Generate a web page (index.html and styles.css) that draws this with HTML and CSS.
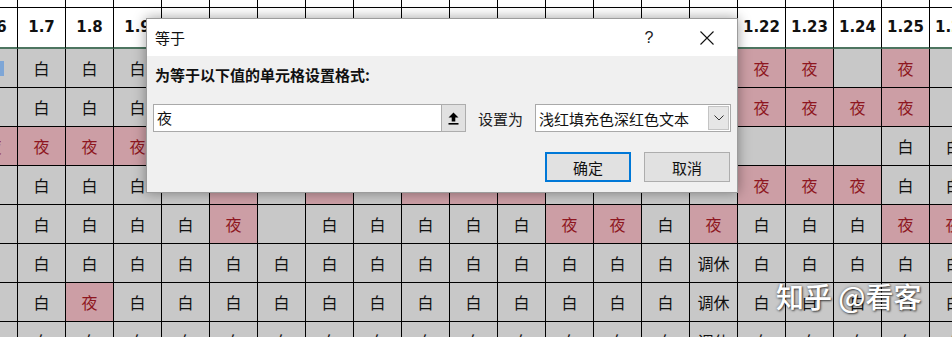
FILE: index.html
```html
<!DOCTYPE html>
<html lang="zh">
<head>
<meta charset="utf-8">
<title>等于</title>
<link rel="stylesheet" href="styles.css">
</head>
<body>
<div class="sheet">
  <div class="row top">
    <div class="t"></div><div class="t"></div><div class="t"></div><div class="t"></div><div class="t"></div><div class="t"></div><div class="t"></div><div class="t"></div><div class="t"></div><div class="t"></div><div class="t"></div><div class="t"></div><div class="t"></div><div class="t"></div><div class="t"></div><div class="t"></div><div class="t"></div><div class="t"></div><div class="t"></div><div class="t"></div><div class="t"></div>
  </div>
  <div class="row head">
    <div class="h">1.6</div><div class="h">1.7</div><div class="h">1.8</div><div class="h">1.9</div><div class="h">1.10</div><div class="h">1.11</div><div class="h">1.12</div><div class="h">1.13</div><div class="h">1.14</div><div class="h">1.15</div><div class="h">1.16</div><div class="h">1.17</div><div class="h">1.18</div><div class="h">1.19</div><div class="h">1.20</div><div class="h">1.21</div><div class="h">1.22</div><div class="h">1.23</div><div class="h">1.24</div><div class="h">1.25</div><div class="h">1.26</div>
  </div>
  <div class="row">
    <div class="c"><span class="mark"></span></div><div class="c">白</div><div class="c">白</div><div class="c">白</div><div class="c">白</div><div class="c">白</div><div class="c">白</div><div class="c">白</div><div class="c">白</div><div class="c">白</div><div class="c">白</div><div class="c">白</div><div class="c">白</div><div class="c">白</div><div class="c">白</div><div class="c">白</div><div class="c y">夜</div><div class="c y">夜</div><div class="c"></div><div class="c y">夜</div><div class="c"></div>
  </div>
  <div class="row">
    <div class="c"></div><div class="c">白</div><div class="c">白</div><div class="c">白</div><div class="c">白</div><div class="c">白</div><div class="c">白</div><div class="c">白</div><div class="c">白</div><div class="c">白</div><div class="c">白</div><div class="c">白</div><div class="c">白</div><div class="c">白</div><div class="c">白</div><div class="c">白</div><div class="c y">夜</div><div class="c y">夜</div><div class="c y">夜</div><div class="c y">夜</div><div class="c"></div>
  </div>
  <div class="row">
    <div class="c y">夜</div><div class="c y">夜</div><div class="c y">夜</div><div class="c y">夜</div><div class="c">白</div><div class="c">白</div><div class="c">白</div><div class="c">白</div><div class="c">白</div><div class="c">白</div><div class="c">白</div><div class="c">白</div><div class="c">白</div><div class="c">白</div><div class="c">白</div><div class="c">白</div><div class="c"></div><div class="c"></div><div class="c"></div><div class="c">白</div><div class="c">白</div>
  </div>
  <div class="row">
    <div class="c"></div><div class="c">白</div><div class="c">白</div><div class="c">白</div><div class="c"></div><div class="c y"></div><div class="c"></div><div class="c y"></div><div class="c"></div><div class="c y"></div><div class="c y"></div><div class="c y"></div><div class="c"></div><div class="c"></div><div class="c"></div><div class="c"></div><div class="c y">夜</div><div class="c y">夜</div><div class="c y">夜</div><div class="c">白</div><div class="c">白</div>
  </div>
  <div class="row">
    <div class="c"></div><div class="c">白</div><div class="c">白</div><div class="c">白</div><div class="c">白</div><div class="c y">夜</div><div class="c"></div><div class="c">白</div><div class="c">白</div><div class="c">白</div><div class="c">白</div><div class="c">白</div><div class="c y">夜</div><div class="c y">夜</div><div class="c">白</div><div class="c y">夜</div><div class="c">白</div><div class="c">白</div><div class="c">白</div><div class="c y">夜</div><div class="c y">夜</div>
  </div>
  <div class="row">
    <div class="c"></div><div class="c">白</div><div class="c">白</div><div class="c">白</div><div class="c">白</div><div class="c">白</div><div class="c">白</div><div class="c">白</div><div class="c">白</div><div class="c">白</div><div class="c">白</div><div class="c">白</div><div class="c">白</div><div class="c">白</div><div class="c">白</div><div class="c">调休</div><div class="c">白</div><div class="c">白</div><div class="c">白</div><div class="c">白</div><div class="c">白</div>
  </div>
  <div class="row">
    <div class="c"></div><div class="c">白</div><div class="c y">夜</div><div class="c">白</div><div class="c">白</div><div class="c">白</div><div class="c">白</div><div class="c">白</div><div class="c">白</div><div class="c">白</div><div class="c">白</div><div class="c">白</div><div class="c">白</div><div class="c">白</div><div class="c">白</div><div class="c">调休</div><div class="c">白</div><div class="c">白</div><div class="c">白</div><div class="c">白</div><div class="c">白</div>
  </div>
  <div class="row">
    <div class="c"></div><div class="c">白</div><div class="c">白</div><div class="c">白</div><div class="c">白</div><div class="c">白</div><div class="c">白</div><div class="c">白</div><div class="c">白</div><div class="c">白</div><div class="c">白</div><div class="c">白</div><div class="c">白</div><div class="c">白</div><div class="c">白</div><div class="c">调休</div><div class="c">白</div><div class="c">白</div><div class="c">白</div><div class="c">白</div><div class="c">白</div>
  </div>
</div>

<div class="dialog">
  <div class="titlebar">
    <span class="title">等于</span>
    <span class="help">?</span>
    <span class="close">
      <svg width="14" height="14" viewBox="0 0 14 14"><path d="M0.5 0.5 L13.5 13.5 M13.5 0.5 L0.5 13.5" stroke="#111" stroke-width="1.1" fill="none"/></svg>
    </span>
  </div>
  <div class="dbody">
    <div class="prompt">为等于以下值的单元格设置格式:</div>
    <div class="inrow">
      <div class="val">夜</div>
      <div class="pick">
        <svg width="11" height="13" viewBox="0 0 11 13"><path d="M5.5 0.5 L10.5 5.5 L7.3 5.5 L7.3 9.5 L3.7 9.5 L3.7 5.5 L0.5 5.5 Z" fill="#000"/><rect x="0.5" y="11" width="10" height="1.6" fill="#000"/></svg>
      </div>
      <span class="setas">设置为</span>
      <div class="sel">
        <span class="seltext">浅红填充色深红色文本</span>
        <span class="dd">
          <svg width="10" height="6" viewBox="0 0 10 6"><path d="M0.5 0.5 L5 5 L9.5 0.5" stroke="#333" stroke-width="1" fill="none"/></svg>
        </span>
      </div>
    </div>
    <div class="btnrow">
      <button class="btn def">确定</button>
      <button class="btn">取消</button>
    </div>
  </div>
</div>

<div class="watermark">知乎 @看客</div>
</body>
</html>
```
FILE: styles.css
```css
html, body {
  margin: 0;
  padding: 0;
  background: #fff;
  overflow: hidden;
  width: 952px;
  height: 337px;
}
body {
  font-family: "Noto Sans CJK SC", "Noto Sans", sans-serif;
  position: relative;
}
.sheet {
  margin-left: -30px;
  width: 1008px;
}
.row {
  display: grid;
  grid-template-columns: repeat(21, 48px);
}
.row > div {
  box-sizing: border-box;
  border-right: 1px solid #000;
  display: flex;
  align-items: center;
  justify-content: center;
}
.top > div {
  height: 8px;
  border-bottom: 1px solid #000;
}
.head > div {
  height: 41px;
  border-bottom: 2px solid #4d7560;
  font-family: "DejaVu Sans", sans-serif;
  font-weight: bold;
  font-size: 15px;
  color: #111;
  padding-bottom: 1px;
  white-space: nowrap;
  overflow: hidden;
}
.c {
  height: 39px;
  border-bottom: 1px solid #000;
  background: #c8c8c8;
  font-size: 16px;
  color: #111;
  white-space: nowrap;
}
.c.y {
  background: #cc9ea5;
  color: #8e1620;
}
.mark {
  display: inline-block;
  width: 5px;
  height: 15px;
  margin-left: 16px;
  background: #7ea6d6;
}
.dialog {
  position: absolute;
  left: 146px;
  top: 18px;
  width: 592px;
  height: 175px;
  box-sizing: border-box;
  background: #f0f0f0;
  border: 1px solid #9c9c9c;
  box-shadow: 0 0 12px rgba(0, 0, 0, 0.38);
  color: #111;
}
.titlebar {
  height: 37px;
  background: #fff;
  display: flex;
  align-items: center;
}
.title {
  font-size: 15px;
  padding-left: 8px;
  flex: 1;
}
.help {
  width: 56px;
  text-align: center;
  font-size: 16px;
  font-family: "Liberation Sans", sans-serif;
  color: #222;
}
.close {
  width: 60px;
  display: flex;
  justify-content: center;
  align-items: center;
}
.dbody {
  padding: 9px 6px 0 6px;
}
.prompt {
  font-weight: bold;
  font-size: 15px;
  line-height: 20px;
  height: 20px;
  margin-left: 2px;
}
.inrow {
  display: flex;
  align-items: center;
  margin-top: 19px;
  height: 28px;
}
.val {
  width: 288px;
  height: 28px;
  box-sizing: border-box;
  border: 1px solid #a9a9a9;
  border-right: none;
  background: #fff;
  padding-left: 3px;
  font-size: 15px;
  line-height: 26px;
}
.pick {
  width: 25px;
  height: 28px;
  box-sizing: border-box;
  border: 1px solid #adadad;
  background: #e1e1e1;
  display: flex;
  align-items: center;
  justify-content: center;
}
.setas {
  font-size: 15px;
  margin-left: 12px;
  margin-right: 12px;
  color: #222;
}
.sel {
  width: 196px;
  height: 28px;
  box-sizing: border-box;
  border: 1px solid #a9a9a9;
  background: #fff;
  display: flex;
  align-items: center;
  padding-left: 3px;
}
.seltext {
  font-size: 15px;
  flex: 1;
  white-space: nowrap;
}
.dd {
  width: 21px;
  height: 24px;
  margin-right: 1px;
  box-sizing: border-box;
  border: 1px solid #c4c4c4;
  background: #e6e6e6;
  display: flex;
  align-items: center;
  justify-content: center;
}
.btnrow {
  display: flex;
  justify-content: flex-end;
  gap: 13px;
  margin-top: 20px;
  margin-right: 1px;
}
.btn {
  width: 86px;
  height: 30px;
  box-sizing: border-box;
  border: 1px solid #adadad;
  background: #e1e1e1;
  font-family: "Noto Sans CJK SC", sans-serif;
  font-size: 15px;
  color: #111;
  padding: 0;
  margin: 0;
}
.btn.def {
  border: 2px solid #0078d7;
}
.watermark {
  position: absolute;
  left: 776px;
  top: 276px;
  font-size: 28px;
  font-weight: 500;
  line-height: 40px;
  color: #fff;
  white-space: nowrap;
  text-shadow: 1px 1px 2px rgba(0, 0, 0, 0.6), 0 0 3px rgba(0, 0, 0, 0.4);
}
```
